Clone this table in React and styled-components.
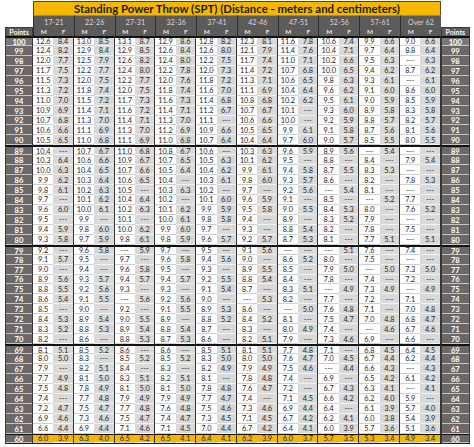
import React from 'react';
import styled, { createGlobalStyle } from 'styled-components';

const GlobalStyle = createGlobalStyle`
  html, body {
    margin: 0;
    background: #ffffff;
  }
  body {
    font-family: Lato, 'Liberation Sans', sans-serif;
  }
`;

const AGES = ['17-21', '22-26', '27-31', '32-36', '37-41', '42-46', '47-51', '52-56', '57-61', 'Over 62'];

// points, then M / F pairs for each age group
const DATA = `
100 12.6 8.4 13.0 8.5 13.1 8.7 12.9 8.6 12.8 8.2 12.3 8.1 11.6 7.8 10.6 7.4 9.9 6.6 9.0 6.6
99 12.4 8.2 12.9 8.4 12.9 8.5 12.6 8.4 12.6 8.0 12.1 7.9 11.4 7.6 10.4 7.1 9.7 6.4 8.8 6.4
98 12.0 7.7 12.5 7.9 12.6 8.2 12.4 8.0 12.2 7.5 11.7 7.4 11.0 7.1 10.2 6.6 9.5 6.3 --- 6.3
97 11.7 7.5 12.2 7.7 12.4 8.0 12.2 7.8 12.0 7.3 11.4 7.2 10.7 6.8 10.0 6.5 9.4 6.2 8.7 6.2
96 11.5 7.3 12.0 7.5 12.2 7.7 12.0 7.6 11.8 7.2 11.3 7.1 10.6 6.5 9.8 6.3 9.3 6.1 --- 6.1
95 11.3 7.2 11.8 7.4 12.0 7.5 11.8 7.4 11.6 7.0 11.1 6.9 10.4 6.4 9.6 6.2 9.1 6.0 8.6 6.0
94 11.0 7.0 11.5 7.2 11.7 7.3 11.6 7.3 11.4 6.8 10.8 6.8 10.2 6.2 9.5 6.1 9.0 5.9 8.5 5.9
93 10.9 6.9 11.4 7.1 11.6 7.2 11.4 7.1 11.2 6.7 10.7 6.7 10.1 --- 9.3 6.0 8.9 5.8 8.3 5.8
92 10.7 6.8 11.3 7.0 11.4 7.1 11.3 7.0 11.1 --- 10.6 6.6 10.0 --- 9.2 5.9 8.8 5.7 8.2 5.7
91 10.6 6.6 11.1 6.9 11.3 7.0 11.2 6.9 10.9 6.6 10.5 6.5 9.9 6.1 9.1 5.8 8.7 5.6 8.1 5.6
90 10.5 6.5 11.0 6.8 11.1 6.9 11.0 6.8 10.7 6.4 10.4 6.4 9.7 6.0 9.0 5.7 8.5 5.5 8.0 5.5
89 10.4 --- 10.7 6.7 11.0 6.8 10.8 6.7 10.6 --- 10.3 6.3 9.6 5.9 8.9 5.6 --- 5.4 --- ---
88 10.3 6.4 10.6 6.6 10.9 6.7 10.7 6.5 10.5 6.3 10.1 6.2 9.5 --- 8.8 --- 8.4 --- 7.9 5.4
87 10.0 6.3 10.4 6.5 10.7 6.6 10.5 6.4 10.4 6.2 9.9 6.1 9.4 5.8 8.7 5.5 8.3 5.3 --- ---
86 9.9 6.2 10.3 6.4 10.6 6.5 10.4 --- 10.3 6.1 9.8 6.0 9.3 5.7 8.6 --- 8.2 --- 7.8 5.3
85 9.8 6.1 10.2 6.3 10.5 --- 10.3 6.3 10.2 --- 9.7 --- 9.2 5.6 --- 5.4 8.1 --- --- ---
84 9.7 --- 10.1 6.2 10.4 6.4 10.2 --- 10.1 6.0 9.6 5.9 9.1 --- 8.5 --- --- 5.2 7.7 ---
83 9.6 6.0 10.0 6.1 10.2 6.3 10.1 6.2 9.9 5.9 9.5 5.8 9.0 5.5 8.4 5.3 8.0 --- 7.6 5.2
82 9.5 --- 9.9 --- 10.1 --- 10.0 6.1 9.8 5.8 9.4 --- 8.9 --- 8.3 5.2 7.9 --- --- ---
81 9.4 5.9 9.8 6.0 10.0 6.2 9.9 6.0 9.7 --- 9.3 --- 8.8 5.4 8.2 --- 7.8 --- 7.5 ---
80 9.3 5.8 9.7 5.9 9.8 6.1 9.8 5.9 9.6 5.7 9.2 5.7 8.7 5.3 8.1 --- 7.7 5.1 --- 5.1
79 9.2 --- 9.6 5.8 --- 5.9 9.7 --- 9.5 --- 9.1 5.6 --- --- --- 5.1 7.6 --- 7.4 ---
78 9.1 5.7 9.5 --- 9.7 --- 9.6 5.8 9.4 5.6 9.0 --- 8.6 5.2 8.0 --- 7.5 --- --- ---
77 9.0 --- 9.4 --- 9.6 5.8 9.5 --- 9.3 --- 8.9 5.5 8.5 --- 7.9 5.0 --- 5.0 7.3 5.0
76 8.9 5.6 9.3 5.7 9.4 5.7 9.4 5.7 9.2 5.5 8.8 5.4 8.4 --- 7.8 --- 7.4 --- 7.2 ---
75 8.8 5.5 9.2 5.6 9.3 --- 9.3 --- 9.1 5.4 8.7 --- 8.3 5.1 --- 4.9 7.3 4.9 --- 4.9
74 8.6 5.4 9.1 5.5 --- 5.6 9.2 5.6 9.0 --- --- 5.3 8.2 --- 7.7 --- 7.2 --- 7.1 ---
73 8.5 --- 9.0 --- 9.2 --- 9.1 5.5 8.9 5.3 8.6 --- --- 5.0 7.6 4.8 7.1 --- 7.0 4.8
72 8.4 5.3 8.9 5.4 9.0 5.5 8.9 --- 8.8 5.2 8.4 5.2 8.1 --- 7.5 4.7 7.0 4.8 6.8 4.7
71 8.3 5.2 8.8 5.3 8.9 5.4 8.8 5.4 8.7 --- 8.3 --- 8.0 4.9 7.4 --- --- 4.6 6.7 4.6
70 8.2 --- 8.6 --- 8.8 5.3 8.7 5.3 8.6 --- 8.2 5.1 7.9 --- 7.3 4.6 6.9 --- 6.6 ---
69 8.1 5.1 8.5 5.2 8.6 --- 8.6 --- 8.5 5.1 8.1 5.1 7.7 4.8 7.1 --- 6.8 4.5 6.4 4.5
68 8.0 5.0 8.3 --- 8.5 5.2 8.5 5.2 8.3 5.0 8.0 5.0 7.6 4.7 7.0 4.5 6.7 4.4 6.2 4.4
67 7.9 --- 8.2 5.1 8.4 --- 8.3 --- 8.2 4.9 7.9 4.9 7.5 4.6 --- 4.4 6.6 4.3 --- 4.3
66 7.7 4.9 8.1 5.0 8.3 5.1 8.2 5.1 8.1 --- 7.8 4.8 7.4 --- 6.9 --- 6.5 4.2 6.1 4.2
65 7.5 4.8 7.8 4.9 8.1 5.0 8.1 5.0 7.8 4.8 7.6 4.7 7.2 --- 6.7 4.3 6.3 4.1 --- 4.1
64 7.4 --- 7.7 4.8 7.9 4.9 7.9 4.9 7.7 4.7 7.4 --- 7.1 4.5 6.6 4.2 6.2 4.0 5.9 ---
63 7.2 4.7 7.5 4.7 7.7 4.8 7.6 4.8 7.5 4.6 7.3 4.6 6.9 4.4 6.4 --- 6.1 3.9 5.7 4.0
62 6.9 4.6 7.3 4.6 7.5 4.7 7.4 4.7 7.3 4.5 7.1 4.5 6.7 4.2 6.2 4.1 6.0 3.8 5.4 3.9
61 6.6 4.4 6.9 4.4 7.1 4.6 7.1 4.5 7.0 4.4 6.7 4.2 6.4 4.1 6.0 3.9 5.7 3.6 5.1 3.6
60 6.0 3.9 6.3 4.0 6.5 4.2 6.5 4.1 6.4 4.1 6.2 3.9 6.0 3.7 5.7 3.5 5.3 3.4 4.9 3.4
`
  .trim()
  .split('\n')
  .map((line) => {
    const [pts, ...vals] = line.trim().split(/\s+/);
    return { pts: Number(pts), vals };
  });

// thick rule drawn above these rows
const HEAVY = { 100: 2, 89: 2, 79: 2, 69: 2, 60: 1 };

const Sheet = styled.div`
  display: grid;
  grid-template-columns: 28px repeat(20, 20.4px) 29px;
  grid-template-rows: 14px 12px 9px repeat(41, 9.94px);
  margin: 1px 0 0 5px;
  width: max-content;
  border-bottom: 1px solid #222;
`;

const Blank = styled.div`
  grid-row: span 2;
`;

const Title = styled.div`
  grid-column: span 20;
  display: flex;
  align-items: center;
  justify-content: center;
  background: #f4b800;
  border: 1px solid #5a4a10;
  border-bottom: none;
  color: #1d1a10;
  font-weight: 700;
  font-size: 11.4px;
  line-height: 1;
  white-space: nowrap;
`;

const AgeHead = styled.div`
  grid-column: span 2;
  display: flex;
  align-items: center;
  justify-content: center;
  background: #5d5a5a;
  border-left: 1px solid #2e2e2e;
  border-top: 1px solid #8a8a8a;
  color: #d9d9d9;
  font-size: 7px;
  letter-spacing: 0.1px;
`;

const SexHead = styled.div`
  display: flex;
  align-items: center;
  justify-content: center;
  background: #5d5a5a;
  border-left: ${(p) => (p.$first ? '1px solid #2e2e2e' : 'none')};
  color: #e6e6e6;
  font-weight: 700;
  font-size: 6.4px;
`;

const PointsHead = styled.div`
  display: flex;
  align-items: center;
  justify-content: center;
  background: #5f5b5b;
  border: 1px solid #3a3a3a;
  border-bottom: none;
  color: #f2f2f2;
  font-weight: 700;
  font-size: 7px;
`;

const PointsCell = styled.div`
  display: flex;
  align-items: center;
  justify-content: center;
  background: ${(p) => (p.$top ? '#7c7777' : '#6d6768')};
  border-top: ${(p) => (p.$heavy ? `${p.$heavy}px solid #111` : 'none')};
  border-left: 1px solid #3a3a3a;
  border-right: 1px solid #3a3a3a;
  box-shadow: inset 0 -1px 0 #c6c4c4;
  color: #ffffff;
  font-weight: 700;
  font-size: 7.6px;
`;

const Value = styled.div`
  display: flex;
  align-items: center;
  justify-content: center;
  background: ${(p) => (p.$gold ? '#f5b700' : p.$female ? '#d9d9d9' : '#ffffff')};
  border-top: ${(p) => (p.$heavy ? `${p.$heavy}px solid #111` : 'none')};
  border-right: ${(p) => (p.$female ? '1px solid #333' : 'none')};
  box-shadow: inset 0 -1px 0 ${(p) => (p.$female ? '#f2f2f2' : '#cfcfcf')};
  color: #262626;
  font-size: 7.3px;
  white-space: nowrap;
`;

export default function App() {
  return (
    <>
      <GlobalStyle />
      <Sheet>
        <Blank />
        <Title>Standing Power Throw (SPT) (Distance - meters and centimeters)</Title>
        <Blank />
        {AGES.map((age) => (
          <AgeHead key={age}>{age}</AgeHead>
        ))}

        <PointsHead>Points</PointsHead>
        {AGES.map((age) => (
          <React.Fragment key={age}>
            <SexHead $first>M</SexHead>
            <SexHead>F</SexHead>
          </React.Fragment>
        ))}
        <PointsHead>Points</PointsHead>

        {DATA.map((row) => (
          <React.Fragment key={row.pts}>
            <PointsCell $heavy={HEAVY[row.pts]} $top={row.pts === 100}>
              {row.pts}
            </PointsCell>
            {row.vals.map((v, i) => (
              <Value
                key={i}
                $female={i % 2 === 1}
                $gold={row.pts === 60}
                $heavy={HEAVY[row.pts]}
              >
                {v}
              </Value>
            ))}
            <PointsCell $heavy={HEAVY[row.pts]} $top={row.pts === 100}>
              {row.pts}
            </PointsCell>
          </React.Fragment>
        ))}
      </Sheet>
    </>
  );
}
